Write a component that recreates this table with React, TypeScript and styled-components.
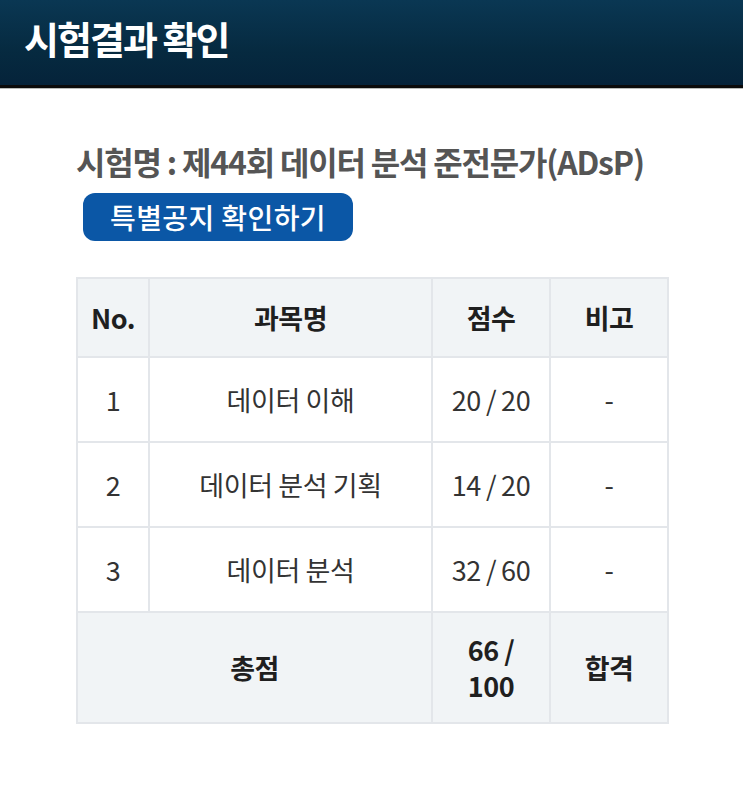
import React from "react";
import styled, { createGlobalStyle } from "styled-components";

const Global = createGlobalStyle`
  html, body { margin: 0; padding: 0; background: #ffffff; }
  body { font-family: "Noto Sans CJK KR", "Noto Sans", sans-serif; }
`;

const Page = styled.div`
  width: 743px;
  min-height: 785px;
  background: #fff;
`;

const Header = styled.header`
  height: 85px;
  background: linear-gradient(180deg, #0a3753 0%, #062a40 60%, #05233a 100%);
  border-bottom: 3px solid #0b0b0b;
  box-shadow: 0 1px 0 #b9bcb9;
  display: flex;
  align-items: center;
  padding-left: 24px;
`;

const HeaderTitle = styled.h1`
  margin: -10px 0 0 0;
  color: #fff;
  font-size: 38px;
  font-weight: 700;
  letter-spacing: -2px;
  line-height: 1;
`;

const Content = styled.main`
  padding: 50px 74px 0 76px;
  display: flex;
  flex-direction: column;
`;

const ExamName = styled.h2`
  margin: 0;
  color: #555;
  font-size: 32px;
  font-weight: 700;
  letter-spacing: -1.2px;
  line-height: 46px;
`;

const NoticeButton = styled.button`
  align-self: flex-start;
  margin: 9px 0 0 7px;
  width: 270px;
  height: 48px;
  border: none;
  border-radius: 12px;
  background: #0b57a6;
  color: #fff;
  font-family: inherit;
  font-size: 28px;
  font-weight: 500;
  letter-spacing: 0.4px;
  padding: 0;
  cursor: pointer;
`;

const Table = styled.table`
  margin-top: 36px;
  width: 593px;
  border-collapse: collapse;
  table-layout: fixed;
  border: 2px solid #e3e6ea;
`;

const Th = styled.th<{ $w?: number }>`
  width: ${(p) => (p.$w ? `${p.$w}px` : "auto")};
  height: 77px;
  background: #f1f4f6;
  border: 2px solid #e3e6ea;
  color: #1f1f1f;
  font-size: 27px;
  font-weight: 700;
  text-align: center;
  padding: 0;
  letter-spacing: -0.5px;
`;

const Td = styled.td`
  height: 83px;
  border: 2px solid #e3e6ea;
  color: #333;
  font-size: 27px;
  font-weight: 400;
  text-align: center;
  padding: 0;
  letter-spacing: -0.4px;
`;

const TotalCell = styled.td`
  height: 109px;
  background: #f1f4f6;
  border: 2px solid #e3e6ea;
  color: #1f1f1f;
  font-size: 27px;
  font-weight: 700;
  text-align: center;
  padding: 0;
  line-height: 36px;
  letter-spacing: -0.5px;
`;

const rows = [
  { no: 1, name: "데이터 이해", score: "20\u2009/\u200920", note: "-" },
  { no: 2, name: "데이터 분석 기획", score: "14\u2009/\u200920", note: "-" },
  { no: 3, name: "데이터 분석", score: "32\u2009/\u200960", note: "-" },
];

export default function App() {
  return (
    <Page>
      <Global />
      <Header>
        <HeaderTitle>시험결과 확인</HeaderTitle>
      </Header>
      <Content>
        <ExamName>시험명 : 제44회 데이터 분석 준전문가(ADsP)</ExamName>
        <NoticeButton>특별공지 확인하기</NoticeButton>
        <Table>
          <thead>
            <tr>
              <Th $w={70}>No.</Th>
              <Th $w={281}>과목명</Th>
              <Th $w={116}>점수</Th>
              <Th>비고</Th>
            </tr>
          </thead>
          <tbody>
            {rows.map((r) => (
              <tr key={r.no}>
                <Td>{r.no}</Td>
                <Td>{r.name}</Td>
                <Td>{r.score}</Td>
                <Td>{r.note}</Td>
              </tr>
            ))}
            <tr>
              <TotalCell colSpan={2}>총점</TotalCell>
              <TotalCell>
                66 /
                <br />
                100
              </TotalCell>
              <TotalCell>합격</TotalCell>
            </tr>
          </tbody>
        </Table>
      </Content>
    </Page>
  );
}
